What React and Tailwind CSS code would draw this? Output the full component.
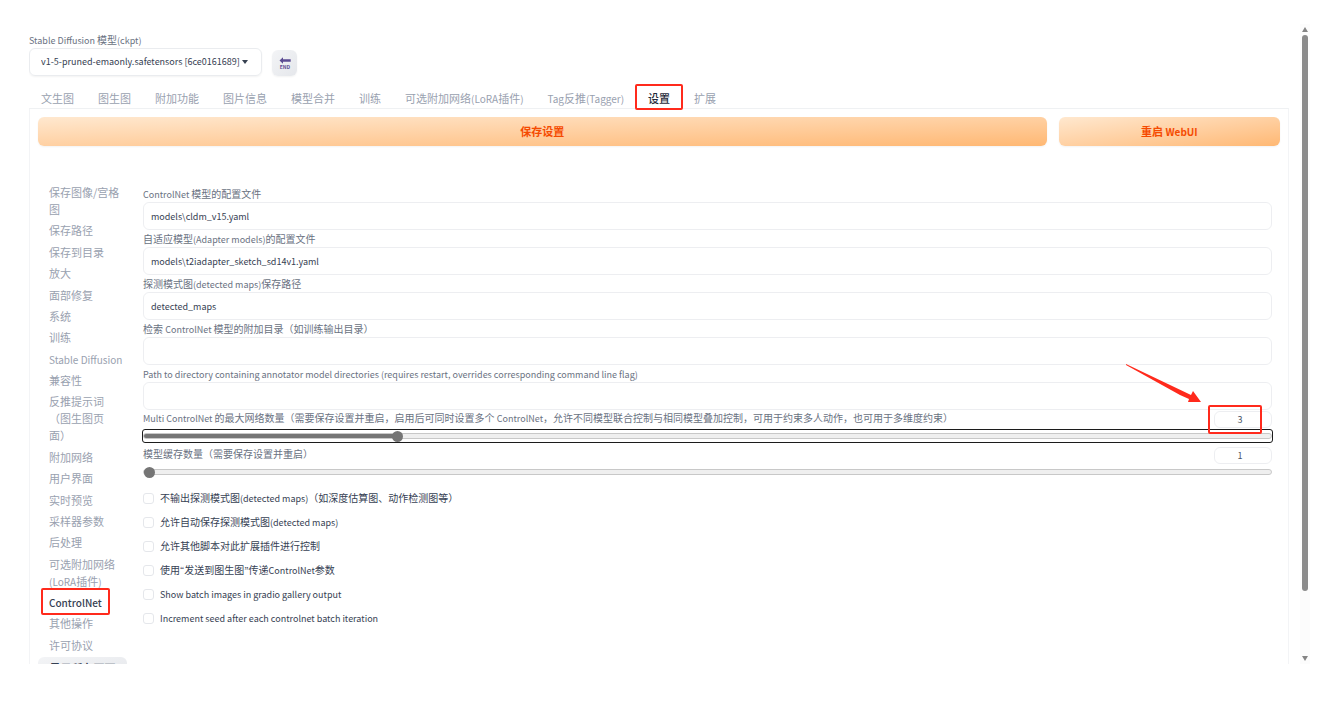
import React, { useState } from 'react';

const tabs = ['文生图', '图生图', '附加功能', '图片信息', '模型合并', '训练', '可选附加网络(LoRA插件)', 'Tag反推(Tagger)', '设置', '扩展'];

const sections = [
    '保存图像/宫格图',
    '保存路径',
    '保存到目录',
    '放大',
    '面部修复',
    '系统',
    '训练',
    'Stable Diffusion',
    '兼容性',
    '反推提示词\n（图生图页\n面）',
    '附加网络',
    '用户界面',
    '实时预览',
    '采样器参数',
    '后处理',
    '可选附加网络(LoRA插件)',
    'ControlNet',
    '其他操作',
    '许可协议',
];

const fields = [
    { id: 'config', label: 'ControlNet 模型的配置文件', value: 'models\\cldm_v15.yaml' },
    { id: 'adapter', label: '自适应模型(Adapter models)的配置文件', value: 'models\\t2iadapter_sketch_sd14v1.yaml' },
    { id: 'detected', label: '探测模式图(detected maps)保存路径', value: 'detected_maps' },
    { id: 'extra', label: '检索 ControlNet 模型的附加目录（如训练输出目录）', value: '' },
    { id: 'annotator', label: 'Path to directory containing annotator model directories (requires restart, overrides corresponding command line flag)', value: '' },
];

const checks = [
    '不输出探测模式图(detected maps)（如深度估算图、动作检测图等）',
    '允许自动保存探测模式图(detected maps)',
    '允许其他脚本对此扩展插件进行控制',
    '使用“发送到图生图”传递ControlNet参数',
    'Show batch images in gradio gallery output',
    'Increment seed after each controlnet batch iteration',
];

// Latin letters look too big beside Chinese ones, so they get one size less
const Mixed = ({ text, large }) =>
    text.split(/([A-Za-z()“”][\x20-\x7e“”]*)/).map((part, index) =>
        index % 2 ? (
            <span key={index} className={`font-['Noto_Sans_CJK_KR',sans-serif] ${large ? 'text-[10px]' : 'text-[9px]'}`}>{part}</span>
        ) : part
    );

// Red frame drawn over the control it points out
const Mark = ({ className }) => (
    <span className={`pointer-events-none absolute rounded-xs border-2 border-[#ff2a1c] ${className}`} />
);

const Slider = ({ id, label, min, max, initial, focused, children }) => {
    const [value, setValue] = useState(initial);
    const percent = ((value - min) / (max - min)) * 100;
    const shift = 5.5 - percent * 0.11;

    return (
        <div>
            <div className="flex h-[18px] justify-between">
                <label htmlFor={id} className="text-[10px] leading-4 whitespace-nowrap text-gray-500"><Mixed text={label} /></label>
                <div className="relative self-end">
                    <input
                        type="text"
                        aria-label={label}
                        value={value}
                        onChange={(e) => setValue(Number(e.target.value) || min)}
                        className="block h-[17px] w-[58px] rounded-md border border-gray-200/70 pr-1.5 text-center text-[9px] leading-4 text-gray-600 outline-none"
                    />
                    {children}
                </div>
            </div>
            <div className={focused ? 'mt-0.5 flex h-3 items-center rounded-xs outline-1 outline-[#1c1c1c]' : 'mt-0.5 flex h-3 items-center'}>
                <input
                    id={id}
                    type="range"
                    min={min}
                    max={max}
                    value={value}
                    onChange={(e) => setValue(Number(e.target.value))}
                    style={{ backgroundImage: `linear-gradient(to right, #757575 calc(${percent}% + ${shift}px), #efefef 0)` }}
                    className="h-1.5 w-full appearance-none rounded-full border border-[#c8c8c8] outline-none [&::-webkit-slider-thumb]:size-[11px] [&::-webkit-slider-thumb]:appearance-none [&::-webkit-slider-thumb]:rounded-full [&::-webkit-slider-thumb]:bg-[#757575]"
                />
            </div>
        </div>
    );
};

const App = () => {
    const [activeTab, setActiveTab] = useState('设置');
    const [activeSection, setActiveSection] = useState('ControlNet');

    return (
        <div className="flex h-screen bg-white pt-6 pr-7 pb-[52px] pl-[29px] font-['Noto_Sans_CJK_SC',sans-serif]">
            <main className="h-full min-w-0 flex-1 overflow-hidden">
                <div className="flex items-end gap-2.5 pt-2">
                    <div>
                        <label htmlFor="ckpt" className="block h-4 text-[10px] leading-4 text-gray-500"><Mixed text="Stable Diffusion 模型(ckpt)" /></label>
                        <div className="relative">
                            <select id="ckpt" className="block h-7 w-[233px] appearance-none rounded-md border border-gray-200/80 pl-[11px] text-[9px] text-gray-700 shadow-xs">
                                <option>v1-5-pruned-emaonly.safetensors [6ce0161689]</option>
                            </select>
                            <svg viewBox="0 0 6 4" className="pointer-events-none absolute top-3 right-3.5 h-1 w-1.5">
                                <path d="M0 0h6L3 4z" fill="#374151" />
                            </svg>
                        </div>
                    </div>
                    <button aria-label="Refresh" className="flex h-[26px] w-[25px] items-center justify-center rounded-md bg-linear-to-br from-gray-100 to-gray-200 shadow-xs">
                        <svg viewBox="0 0 12 12" className="size-3">
                            <path d="M0.5 3.5 4 0.3v2h7.7v2.4H4v2z" fill="#5b4b92" />
                            <text x="6" y="11.5" textAnchor="middle" fontSize="5" fontWeight="700" fill="#5b4b92">END</text>
                        </svg>
                    </button>
                </div>

                <nav className="mt-3 flex h-5 items-center">
                    {tabs.map((tab) => (
                        <button
                            key={tab}
                            onClick={() => setActiveTab(tab)}
                            className={`relative px-3 text-[11px] leading-5 whitespace-nowrap ${tab === activeTab ? 'font-medium text-gray-800' : 'text-gray-400'}`}
                        >
                            <Mixed text={tab} large />
                            {tab === '设置' && <Mark className="-inset-x-px -top-1 -bottom-0.5" />}
                        </button>
                    ))}
                </nav>

                <section className="h-full border border-gray-100 border-t-gray-200/60 px-2 pt-2">
                    <div className="grid grid-cols-[41fr_9fr] gap-3 text-[11px] font-semibold text-orange-600">
                        <button className="h-[29px] rounded-md bg-linear-to-br from-[#ffe8cf] to-[#ffb873] shadow-xs">保存设置</button>
                        <button className="h-[29px] rounded-md bg-linear-to-br from-[#ffe8cf] to-[#ffb873] shadow-xs"><Mixed text="重启 WebUI" large /></button>
                    </div>

                    <div className="mt-[38px] flex">
                        <aside className="w-[89px] shrink-0">
                            <div className="flex h-[470px] flex-col items-start justify-between">
                                {sections.map((name) => (
                                    <button
                                        key={name}
                                        onClick={() => setActiveSection(name)}
                                        className={`relative mr-1 pl-[11px] text-left text-[11px] leading-[17px] whitespace-pre-line ${name === activeSection ? 'font-medium text-gray-700' : 'text-gray-400'}`}
                                    >
                                        <Mixed text={name} large />
                                        {name === 'ControlNet' && <Mark className="-top-1.5 -right-2 -bottom-1 left-[3px]" />}
                                    </button>
                                ))}
                            </div>
                            <button className="mt-0.5 h-[22px] w-full rounded-md bg-linear-to-br from-gray-100 to-gray-200 text-[11px] font-semibold text-gray-700">显示所有页面</button>
                        </aside>

                        <div className="ml-4 min-w-0 flex-1 pt-0.5 pr-2">
                            <div className="flex flex-col gap-px">
                                {fields.map((field) => (
                                    <div key={field.id}>
                                        <label htmlFor={field.id} className="block h-4 text-[10px] leading-4 text-gray-500"><Mixed text={field.label} /></label>
                                        <input
                                            id={field.id}
                                            type="text"
                                            defaultValue={field.value}
                                            className="block h-7 w-full rounded-md border border-gray-200/70 px-[7px] text-[9px] text-gray-700"
                                        />
                                    </div>
                                ))}
                            </div>

                            <div className="flex flex-col gap-1">
                                <Slider
                                    id="units"
                                    label="Multi ControlNet 的最大网络数量（需要保存设置并重启，启用后可同时设置多个 ControlNet，允许不同模型联合控制与相同模型叠加控制，可用于约束多人动作，也可用于多维度约束）"
                                    min={1}
                                    max={10}
                                    initial={3}
                                    focused
                                >
                                    <Mark className="-inset-y-1.5 right-2.5 -left-1.5" />
                                    <svg viewBox="0 0 76 40" className="pointer-events-none absolute right-[70px] bottom-6 h-10 w-[76px]">
                                        <path d="M0 0 65 31 67 27 75 38 62 38 63 35 54 31 0 1z" fill="#ff2a1c" />
                                    </svg>
                                </Slider>
                                <Slider id="cache" label="模型缓存数量（需要保存设置并重启）" min={1} max={10} initial={1} />
                            </div>

                            <div className="mt-3 flex flex-col gap-2">
                                {checks.map((text) => (
                                    <label key={text} className="flex h-4 items-center gap-1.5 text-[10px] leading-4 text-gray-700">
                                        <input type="checkbox" className="size-[11px] appearance-none rounded-[3px] border border-gray-200 checked:bg-orange-500" />
                                        <span><Mixed text={text} /></span>
                                    </label>
                                ))}
                            </div>
                        </div>
                    </div>
                </section>
            </main>

            <div className="ml-[11px] flex w-2.5 flex-col items-center bg-[#fcfcfc] py-[3px]">
                <svg viewBox="0 0 6 5" className="h-[5px] w-1.5"><path d="M3 0 6 5H0z" fill="#858585" /></svg>
                <div className="my-[3px] w-full flex-1 px-0.5">
                    <div className="h-9/10 rounded-full bg-[#8b8b8b]" />
                </div>
                <svg viewBox="0 0 6 5" className="h-[5px] w-1.5"><path d="M0 0h6L3 5z" fill="#858585" /></svg>
            </div>
        </div>
    );
};

export default App;
